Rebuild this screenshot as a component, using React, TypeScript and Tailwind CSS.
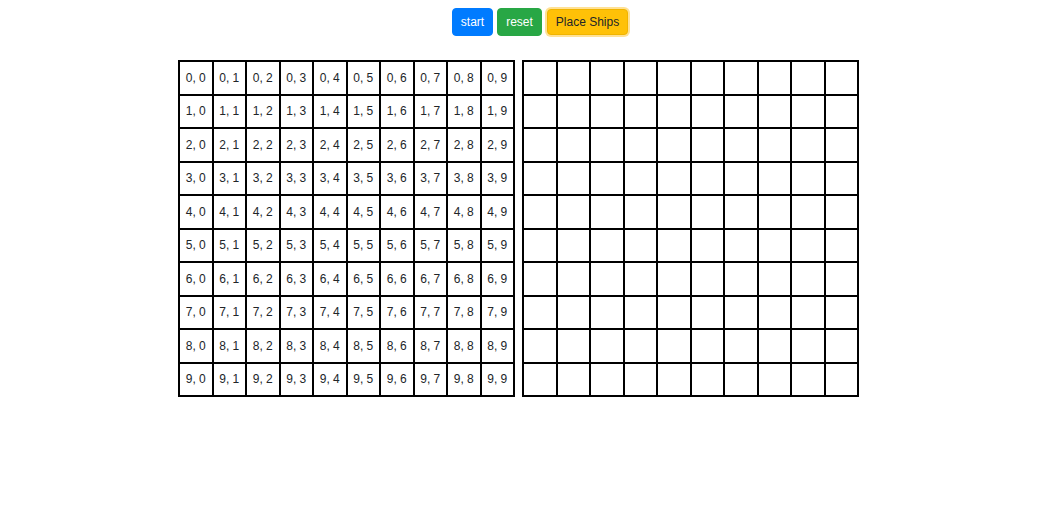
import React from 'react';

const rows = Array.from({ length: 10 }, (_, i) => i);
const cols = Array.from({ length: 10 }, (_, i) => i);

const Board: React.FC<{ labels?: boolean }> = ({ labels }) => (
  <div className="grid h-[337px] w-[337px] grid-cols-10 grid-rows-10 gap-[2px] bg-black p-[2px]">
    {rows.map((r) =>
      cols.map((c) => (
        <div
          key={`${r}-${c}`}
          className="flex items-center justify-center bg-white text-[12px] leading-none text-[#212529]"
        >
          {labels ? `${r}, ${c}` : ''}
        </div>
      )),
    )}
  </div>
);

export default function App() {
  return (
    <div className="h-[513px] w-full bg-white font-['Liberation_Sans',Arial,sans-serif]">
      <div className="flex justify-center gap-1 pl-5 pt-2">
        <button className="h-[28px] rounded border border-[#007bff] bg-[#007bff] px-2 text-[12px] leading-[18px] text-white">
          start
        </button>
        <button className="h-[28px] rounded border border-[#28a745] bg-[#28a745] px-2 text-[12px] leading-[18px] text-white">
          reset
        </button>
        <button className="m-[1px] h-[26px] rounded border border-[#f0b400] bg-[#ffc107] px-2 text-[12px] leading-[18px] text-[#212529] shadow-[0_0_0_2px_rgba(255,200,60,0.55)]">
          Place Ships
        </button>
      </div>
      <div className="ml-[178px] mt-6 flex gap-[7px]">
        <Board labels />
        <Board />
      </div>
    </div>
  );
}
